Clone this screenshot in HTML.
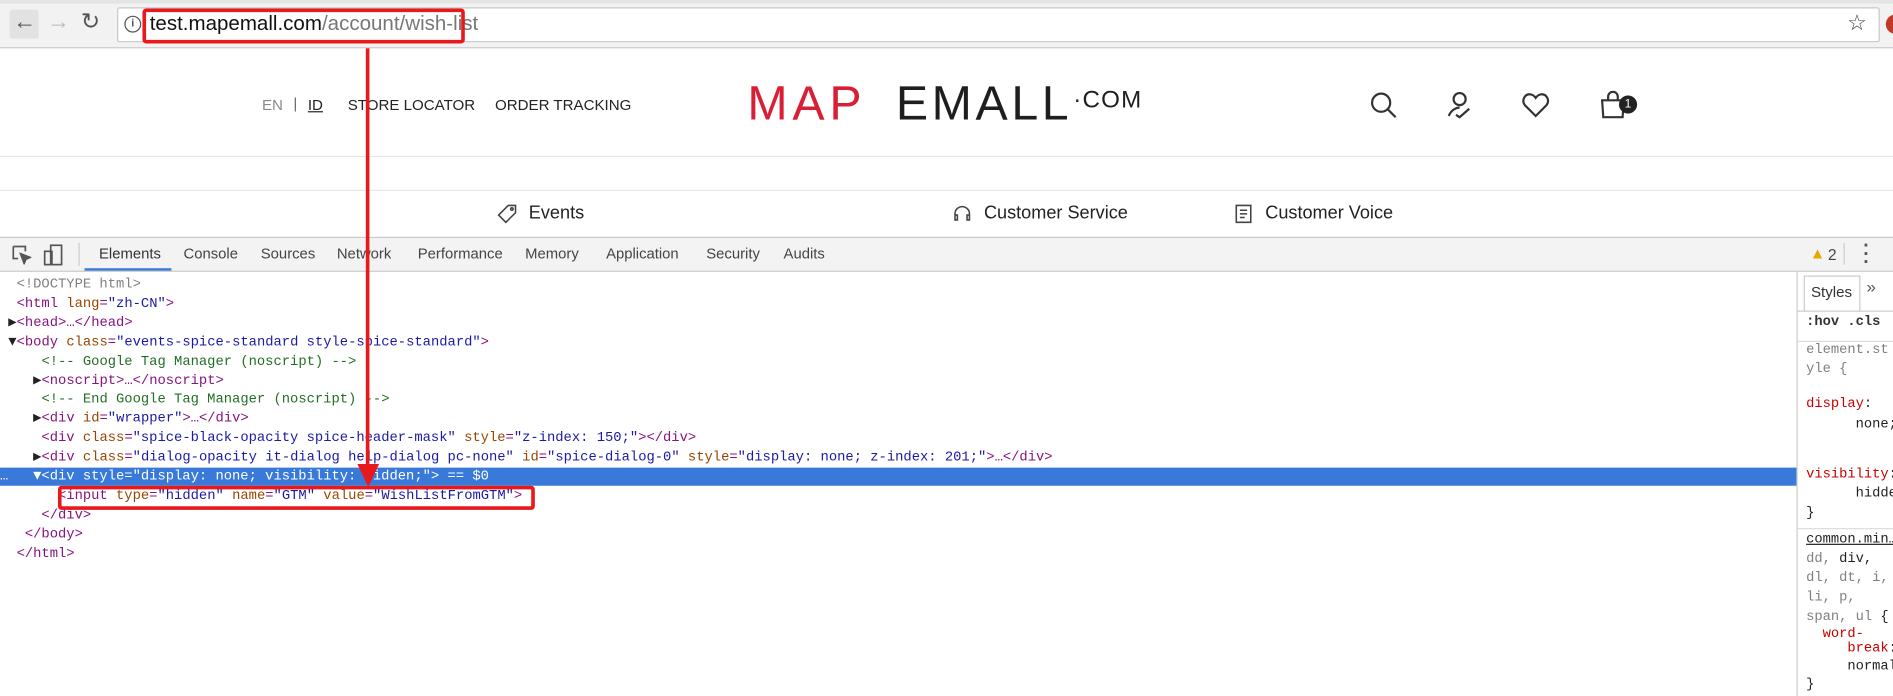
<!DOCTYPE html>
<html><head><meta charset="utf-8"><style>
*{margin:0;padding:0;box-sizing:border-box}
body{width:1893px;height:696px;overflow:hidden;background:#fff;font-family:"Liberation Sans",sans-serif;position:relative}
#s{position:absolute;left:0;top:0;width:1568px;height:576px;transform:scale(1.2073,1.2083);transform-origin:0 0;overflow:hidden}
.abs{position:absolute}
.code{position:absolute;font-family:"Liberation Mono",monospace;font-size:11.45px;white-space:pre;color:#881280;line-height:15.9px}
.sl{position:absolute;left:1496px;font-family:"Liberation Mono",monospace;font-size:11.4px;white-space:pre;color:#222;line-height:16px}
.a{color:#994500}.v{color:#1a1aa6}.c{color:#236e25}.g{color:#808080}.k{color:#222}.r{color:#c80000}
</style></head><body><div id="s">
<!-- browser chrome -->
<div class="abs" style="left:0;top:0;width:1568px;height:40px;background:#f2f2f2;border-bottom:1px solid #ccc"></div>
<div class="abs" style="left:0;top:0;width:1568px;height:3px;background:#e4e4e4"></div>
<div class="abs" style="left:8px;top:8px;width:24px;height:24px;background:#e2e2e2;border-radius:2px"></div>
<div class="abs" style="left:11px;top:8px;font-size:19px;color:#555">&#8592;</div>
<div class="abs" style="left:39px;top:8px;font-size:19px;color:#bbb">&#8594;</div>
<div class="abs" style="left:67px;top:7px;font-size:19px;color:#555">&#8635;</div>
<div class="abs" style="left:97px;top:6px;width:1460px;height:29px;background:#fff;border:1px solid #c8c8c8;border-radius:2px"></div>
<div class="abs" style="left:103px;top:13px;width:14px;height:14px;border:1.5px solid #555;border-radius:50%;font-size:9px;text-align:center;line-height:11px;color:#555;font-weight:bold">i</div>
<div class="abs" style="left:124px;top:10px;font-size:17px;color:#111">test.mapemall.com<span style="color:#777">/account/wish-list</span></div>
<div class="abs" style="left:1530px;top:9px;font-size:18px;color:#444">&#9734;</div>
<div class="abs" style="left:1562px;top:12px;width:16px;height:16px;border-radius:50%;background:#c0392b"></div>
<!-- header -->
<div class="abs" style="left:217px;top:80px;font-size:12.5px;color:#888">EN</div>
<div class="abs" style="left:243px;top:79px;font-size:12.5px;color:#666">|</div>
<div class="abs" style="left:255px;top:80px;font-size:12.5px;color:#222;text-decoration:underline">ID</div>
<div class="abs" style="left:288px;top:80px;font-size:12.5px;color:#222">STORE LOCATOR</div>
<div class="abs" style="left:410px;top:80px;font-size:12.5px;color:#222">ORDER TRACKING</div>
<div class="abs" style="left:619px;top:63px;font-size:40px;color:#d91f35;letter-spacing:4px;line-height:46px">MAP</div>
<div class="abs" style="left:742px;top:63px;font-size:40px;color:#1e1e1e;letter-spacing:3px;line-height:46px">EMALL</div>
<div class="abs" style="left:889px;top:72px;font-size:20px;color:#1e1e1e;letter-spacing:1px">·COM</div>
<svg class="abs" style="left:1134px;top:75px" width="24" height="24" viewBox="0 0 24 24" fill="none" stroke="#333" stroke-width="1.8"><circle cx="10" cy="10" r="7.5"/><path d="M15.5 15.5L22 22"/></svg>
<svg class="abs" style="left:1197px;top:75px" width="24" height="24" viewBox="0 0 24 24" fill="none" stroke="#333" stroke-width="1.8"><circle cx="12" cy="7" r="5"/><path d="M3 21c2-5 6-7 9-7M9 20l3 2 8-7"/></svg>
<svg class="abs" style="left:1260px;top:76px" width="24" height="22" viewBox="0 0 24 22" fill="none" stroke="#333" stroke-width="1.8"><path d="M12 20L3 11C0 7 3 2 7 2c2 0 4 1.5 5 3 1-1.5 3-3 5-3 4 0 7 5 4 9z"/></svg>
<svg class="abs" style="left:1324px;top:75px" width="24" height="24" viewBox="0 0 24 24" fill="none" stroke="#333" stroke-width="1.8"><path d="M3 8h18l-1 14H4zM8 8V5a4 4 0 018 0v3"/></svg>
<div class="abs" style="left:1341px;top:79px;width:15px;height:15px;border-radius:50%;background:#222;color:#fff;font-size:10px;text-align:center;line-height:15px">1</div>
<div class="abs" style="left:0;top:129px;width:1568px;height:1px;background:#e6e6e6"></div>
<div class="abs" style="left:0;top:157px;width:1568px;height:1px;background:#e6e6e6"></div>
<svg class="abs" style="left:412px;top:169px" width="16" height="16" viewBox="0 0 16 16" fill="none" stroke="#444" stroke-width="1.3"><path d="M9 1h6v6l-8 8-6-6z"/><circle cx="12" cy="4" r="1"/></svg>
<div class="abs" style="left:438px;top:168px;font-size:15px;color:#222">Events</div>
<svg class="abs" style="left:789px;top:169px" width="16" height="16" viewBox="0 0 16 16" fill="none" stroke="#444" stroke-width="1.3"><path d="M2 10V8a6 6 0 0112 0v2M2 9h2v4H2zM12 9h2v4h-2z"/></svg>
<div class="abs" style="left:815px;top:168px;font-size:15px;color:#222">Customer Service</div>
<svg class="abs" style="left:1022px;top:169px" width="16" height="16" viewBox="0 0 16 16" fill="none" stroke="#444" stroke-width="1.3"><path d="M2 1h12v14H2zM5 5h6M5 8h6M5 11h4"/></svg>
<div class="abs" style="left:1048px;top:168px;font-size:15px;color:#222">Customer Voice</div>
<!-- devtools -->
<div class="abs" style="left:0;top:196px;width:1568px;height:29px;background:#f3f3f3;border-top:1px solid #ccc;border-bottom:1px solid #ccc"></div>
<svg class="abs" style="left:10px;top:203px" width="16" height="16" viewBox="0 0 16 16" fill="none" stroke="#555" stroke-width="1.4"><path d="M1 1h10v4M1 1v10h4"/><path d="M7 7l3 8 1.5-3.5L15 10z" fill="#555"/></svg>
<svg class="abs" style="left:36px;top:202px" width="16" height="18" viewBox="0 0 16 18" fill="none" stroke="#555" stroke-width="1.4"><rect x="6" y="1" width="9" height="16"/><rect x="1" y="6" width="6" height="11"/></svg>
<div class="abs" style="left:65px;top:201px;width:1px;height:19px;background:#ccc"></div>
<div class="abs" style="left:70px;top:222px;width:72px;height:2px;background:#3879d9"></div>
<div class="abs" style="left:82px;top:203px;font-size:12.3px;color:#333">Elements</div>
<div class="abs" style="left:152px;top:203px;font-size:12.3px;color:#444">Console</div>
<div class="abs" style="left:216px;top:203px;font-size:12.3px;color:#444">Sources</div>
<div class="abs" style="left:279px;top:203px;font-size:12.3px;color:#444">Network</div>
<div class="abs" style="left:346px;top:203px;font-size:12.3px;color:#444">Performance</div>
<div class="abs" style="left:435px;top:203px;font-size:12.3px;color:#444">Memory</div>
<div class="abs" style="left:502px;top:203px;font-size:12.3px;color:#444">Application</div>
<div class="abs" style="left:585px;top:203px;font-size:12.3px;color:#444">Security</div>
<div class="abs" style="left:649px;top:203px;font-size:12.3px;color:#444">Audits</div>
<div class="abs" style="left:1499px;top:202px;font-size:13px;color:#e6a700">&#9650;</div>
<div class="abs" style="left:1514px;top:203px;font-size:13px;color:#444">2</div>
<div class="abs" style="left:1527px;top:201px;width:1px;height:18px;background:#ccc"></div>
<div class="abs" style="left:1543px;top:200px;font-size:16px;color:#555;font-weight:bold;line-height:7px;width:6px;text-align:center">·<br>·<br>·</div>
<!-- selected line -->
<div class="abs" style="left:0;top:387px;width:1488px;height:15px;background:#3879d9"></div>
<div class="code" style="left:0;top:228px"><span class="g">  &lt;!DOCTYPE html&gt;</span>
  &lt;html <span class="a">lang</span>=<span class="v">"zh-CN"</span>&gt;
 <span class="k">▶</span>&lt;head&gt;…&lt;/head&gt;
 <span class="k">▼</span>&lt;body <span class="a">class</span>=<span class="v">"events-spice-standard style-spice-standard"</span>&gt;
     <span class="c">&lt;!-- Google Tag Manager (noscript) --&gt;</span>
    <span class="k">▶</span>&lt;noscript&gt;…&lt;/noscript&gt;
     <span class="c">&lt;!-- End Google Tag Manager (noscript) --&gt;</span>
    <span class="k">▶</span>&lt;div <span class="a">id</span>=<span class="v">"wrapper"</span>&gt;…&lt;/div&gt;
     &lt;div <span class="a">class</span>=<span class="v">"spice-black-opacity spice-header-mask"</span> <span class="a">style</span>=<span class="v">"z-index: 150;"</span>&gt;&lt;/div&gt;
    <span class="k">▶</span>&lt;div <span class="a">class</span>=<span class="v">"dialog-opacity it-dialog help-dialog pc-none"</span> <span class="a">id</span>=<span class="v">"spice-dialog-0"</span> <span class="a">style</span>=<span class="v">"display: none; z-index: 201;"</span>&gt;…&lt;/div&gt;
<span style="color:#fff">…   ▼&lt;div style="display: none; visibility: hidden;"&gt; == $0</span>
       &lt;input <span class="a">type</span>=<span class="v">"hidden"</span> <span class="a">name</span>=<span class="v">"GTM"</span> <span class="a">value</span>=<span class="v">"WishListFromGTM"</span>&gt;
     &lt;/div&gt;
   &lt;/body&gt;
  &lt;/html&gt;</div>
<!-- right panel -->
<div class="abs" style="left:1488px;top:225px;width:1px;height:351px;background:#ccc"></div>
<div class="abs" style="left:1494px;top:228px;width:47px;height:30px;border:1px solid #ccc;border-bottom:none;background:#fff;font-size:12.5px;color:#333;padding:6px 0 0 5px">Styles</div>
<div class="abs" style="left:1546px;top:229px;font-size:14px;color:#555">»</div>
<div class="abs" style="left:1489px;top:257px;width:79px;height:1px;background:#ccc"></div>
<div class="sl" style="top:259px;color:#333;font-weight:bold">:hov .cls</div>
<div class="abs" style="left:1489px;top:282px;width:79px;height:1px;background:#ddd"></div>
<div class="sl g" style="top:282px">element.st</div>
<div class="sl g" style="top:298px">yle {</div>
<div class="sl r" style="top:327px">display<span class="k">:</span></div>
<div class="sl" style="top:344px">      none;</div>
<div class="sl r" style="top:385px">visibility<span class="k">:</span></div>
<div class="sl" style="top:401px">      hidden;</div>
<div class="sl" style="top:417px">}</div>
<div class="abs" style="left:1489px;top:437px;width:79px;height:1px;background:#ddd"></div>
<div class="sl" style="top:439px;text-decoration:underline">common.min…</div>
<div class="sl" style="top:455px"><span class="g">dd,</span> div,</div>
<div class="sl g" style="top:471px">dl, dt, i,</div>
<div class="sl g" style="top:487px">li, p,</div>
<div class="sl" style="top:503px"><span class="g">span, ul</span> {</div>
<div class="sl r" style="top:517px">  word-</div>
<div class="sl r" style="top:529px">     break<span class="k">:</span></div>
<div class="sl" style="top:544px">     normal;</div>
<div class="sl" style="top:559px">}</div>
<!-- red annotations -->
<div class="abs" style="left:118px;top:7px;width:267px;height:29px;border:3px solid #e8191c;border-radius:3px"></div>
<div class="abs" style="left:48px;top:402px;width:395px;height:20px;border:3px solid #e8191c;border-radius:3px"></div>
<div class="abs" style="left:303px;top:40px;width:3px;height:348px;background:#e8191c"></div>
<svg class="abs" style="left:296px;top:384px" width="18" height="20"><path d="M0 0L18 0L9 19z" fill="#e8191c"/></svg>
</div></body></html>
